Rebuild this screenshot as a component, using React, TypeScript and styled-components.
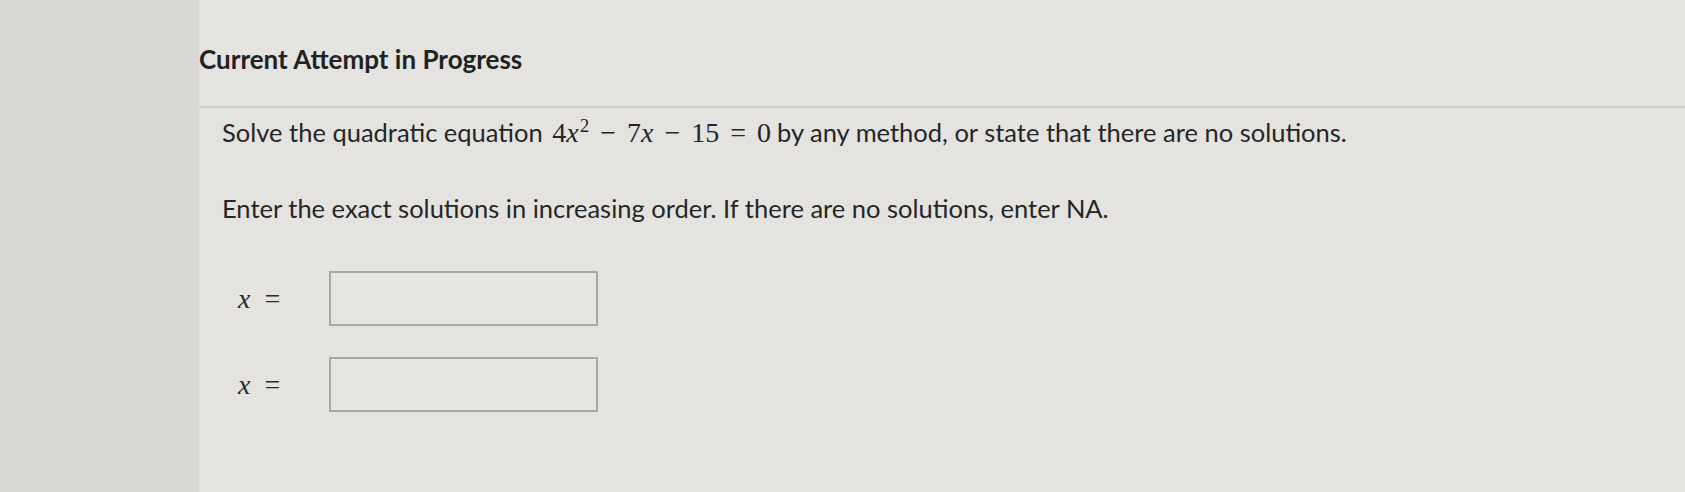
import { createGlobalStyle, styled } from "styled-components";

const GlobalStyle = createGlobalStyle`
  html, body {
    margin: 0;
    padding: 0;
    background: #e3e2de;
  }
  body {
    font-family: Lato, "Noto Sans", "Liberation Sans", sans-serif;
    color: #262626;
  }
`;

const Page = styled.div`
  display: flex;
  width: 1685px;
  height: 492px;
  overflow: hidden;
`;

const SideStrip = styled.aside`
  width: 199px;
  flex-shrink: 0;
  background: #d9d8d4;
`;

const Main = styled.main`
  flex: 1;
  display: flex;
  flex-direction: column;
  background: #e4e3df;
`;

const Title = styled.h2`
  margin: 0;
  padding: 43px 0 0 0;
  font-size: 26px;
  font-weight: 700;
  line-height: 32px;
  color: #222;
`;

const Divider = styled.hr`
  margin: 31px 0 0 0;
  border: none;
  border-top: 2px solid #cfcecb;
`;

const Body = styled.section`
  display: flex;
  flex-direction: column;
  padding: 6px 0 0 23px;
`;

const Paragraph = styled.p<{ $gap?: number }>`
  margin: ${({ $gap }) => $gap ?? 0}px 0 0 0;
  font-size: 25.5px;
  line-height: 36px;
  color: #262626;
`;

const Math = styled.span`
  font-family: "Liberation Serif", "DejaVu Serif", serif;
  font-size: 28px;
  margin: 0 6px 0 3px;
`;

const Var = styled.i`
  font-style: italic;
`;

const Sup = styled.sup`
  font-size: 19px;
  line-height: 0;
  margin-left: 1px;
`;

const Op = styled.span`
  margin: 0 11px;
`;

const Answers = styled.div`
  display: flex;
  flex-direction: column;
  gap: 31px;
  margin-top: 45px;
  padding-left: 16px;
`;

const AnswerRow = styled.div`
  display: flex;
  align-items: center;
`;

const Label = styled.span`
  width: 91px;
  font-family: "Liberation Serif", "DejaVu Serif", serif;
  font-size: 28px;
  color: #2b2b2b;
`;

const AnswerBox = styled.input`
  width: 269px;
  height: 55px;
  box-sizing: border-box;
  border: 2px solid #a9a8a5;
  background: #e6e5e1;
  outline: none;
  padding: 0 8px;
  font-size: 20px;
`;

function Equation() {
  return (
    <Math>
      4<Var>x</Var>
      <Sup>2</Sup>
      <Op>−</Op>7<Var>x</Var>
      <Op>−</Op>15<Op>=</Op>0
    </Math>
  );
}

export default function App() {
  return (
    <>
      <GlobalStyle />
      <Page>
        <SideStrip />
        <Main>
          <Title>Current Attempt in Progress</Title>
          <Divider />
          <Body>
            <Paragraph>
              Solve the quadratic equation <Equation />
              by any method, or state that there are no solutions.
            </Paragraph>
            <Paragraph $gap={39}>
              Enter the exact solutions in increasing order. If there are no
              solutions, enter NA.
            </Paragraph>
            <Answers>
              <AnswerRow>
                <Label>
                  <Var>x</Var> &nbsp;=
                </Label>
                <AnswerBox type="text" />
              </AnswerRow>
              <AnswerRow>
                <Label>
                  <Var>x</Var> &nbsp;=
                </Label>
                <AnswerBox type="text" />
              </AnswerRow>
            </Answers>
          </Body>
        </Main>
      </Page>
    </>
  );
}
